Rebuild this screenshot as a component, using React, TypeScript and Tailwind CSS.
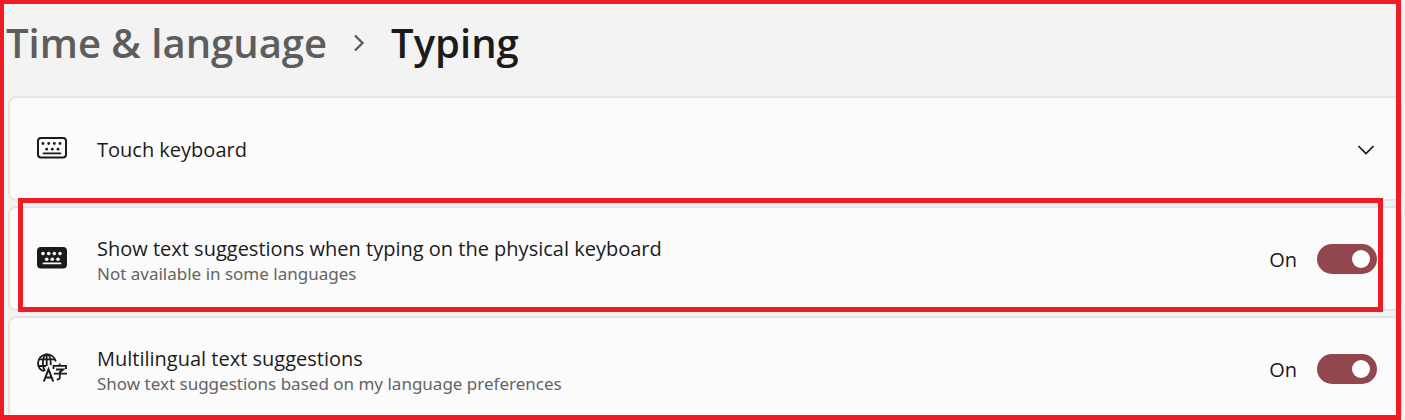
import type { ReactNode } from "react";

function KeyboardIcon({ filled = false }: { filled?: boolean }) {
  const ink = filled ? "#fbfbfb" : "#1b1b1b";
  return (
    <svg viewBox="0 0 30 22" className="h-[22px] w-[30px]" aria-hidden="true">
      <rect x="1" y="1" width="28" height="19.500" rx="3" fill={filled ? "#1b1b1b" : "none"} stroke="#1b1b1b" strokeWidth="2" />
      {[6, 11.7, 17.3, 23].map((x) => (
        <circle key={x} cx={x} cy="6.5" r={filled ? 1.8 : 1.4} fill={ink} />
      ))}
      {[9.7, 15.3, 21].map((x) => (
        <circle key={x} cx={x} cy="12.2" r={filled ? 1.8 : 1.4} fill={ink} />
      ))}
      <path d="M6.500 16.400h17" stroke={ink} strokeWidth="1.8" strokeLinecap="round" />
    </svg>
  );
}

function LanguageIcon() {
  return (
    <svg viewBox="0 0 30 30" className="size-[30px]" fill="none" stroke="#1b1b1b" strokeWidth="1.8" aria-hidden="true">
      <path d="M7 18.200C3.500 17 1 13.800 1 10a9 9 0 0 1 17.800-1.500" />
      <path d="M8 18C6.500 16 5.800 13 5.800 10S7.200 1.300 9.700 1.300s4 4 4 8.700v2" />
      <path d="M2 6.300h16M1.500 13h7.500M9.700 1v12" />
      <path d="M6.800 28.500l4.700-12.200 4.700 12.200M8.400 24.500h6.200" strokeWidth="2" />
      <path d="M16.500 16v-3.200H29V16M22.700 10.500v2.300M19 16.500h7.300l-3.500 2.700v5.500c0 1.300-.5 1.800-3 1.800M16.800 20.600H30" />
    </svg>
  );
}

function Card({ icon, title, note, highlighted, children }: {
  icon: ReactNode;
  title: string;
  note?: string;
  highlighted?: boolean;
  children: ReactNode;
}) {
  return (
    <section className="relative flex h-[105px] shrink-0 items-center rounded-lg border-2 border-[#e5e5e5] bg-[#fbfbfb] pr-[23px] pl-[27px]">
      <div className="flex w-[60px] shrink-0 pb-[2px]">{icon}</div>
      <div className="min-w-0 flex-1 pt-[3px]">
        <h2 className="text-[20px] leading-7">{title}</h2>
        {note && <p className="font-['Noto_Sans',sans-serif] text-[17px] leading-[22px] text-[#646464]">{note}</p>}
      </div>
      {children}
      {highlighted && (
        <div className="pointer-events-none absolute -top-[10px] right-[17px] -bottom-[3px] left-2 z-10 border-[5px] border-[#ef1c23]" />
      )}
    </section>
  );
}

function Toggle({ label }: { label: string }) {
  return (
    <label className="flex items-center gap-5 text-[20px]">
      <span className="pt-[3px]">On</span>
      <span className="relative flex">
        <input type="checkbox" role="switch" aria-label={label} defaultChecked className="peer h-[30px] w-[60px] appearance-none rounded-full bg-[#8a8a8a] checked:bg-[#924750]" />
        <span className="pointer-events-none absolute top-[6px] left-[7px] size-[18px] rounded-full bg-white peer-checked:right-[7px] peer-checked:left-auto" />
      </span>
    </label>
  );
}

export default function App() {
  return (
    <main className="relative flex h-screen flex-col overflow-hidden bg-[#f3f3f3] font-['Open_Sans','Noto_Sans',sans-serif] text-[#1b1b1b]">
      <nav className="flex h-24 shrink-0 items-center pb-[11px] pl-[6px] text-[40px] font-semibold" aria-label="Breadcrumb">
        <a href="#time-language" className="text-[#5d5d5d]">Time &amp; language</a>
        <svg viewBox="0 0 12 18" className="mx-[26px] h-[18px] w-3" fill="none" stroke="#5d5d5d" strokeWidth="2.4" aria-hidden="true">
          <path d="M2 1.500l7.500 7.500L2 16.500" />
        </svg>
        <h1>Typing</h1>
      </nav>
      <div className="flex flex-col gap-[5px] pr-[3px] pl-2">
        <Card icon={<KeyboardIcon />} title="Touch keyboard">
          <button type="button" aria-label="Expand touch keyboard" className="pt-[2px] pr-[3px]">
            <svg viewBox="0 0 16 10" className="h-[10px] w-4" fill="none" stroke="#1b1b1b" strokeWidth="1.6" aria-hidden="true">
              <path d="M.500 1l7.500 7.500L15.500 1" />
            </svg>
          </button>
        </Card>
        <Card icon={<KeyboardIcon filled />} title="Show text suggestions when typing on the physical keyboard" note="Not available in some languages" highlighted>
          <Toggle label="Show text suggestions when typing on the physical keyboard" />
        </Card>
        <Card icon={<LanguageIcon />} title="Multilingual text suggestions" note="Show text suggestions based on my language preferences">
          <Toggle label="Multilingual text suggestions" />
        </Card>
      </div>
      <div className="pointer-events-none absolute inset-y-0 right-1 left-0 z-20 border-4 border-r-[5px] border-b-[5px] border-[#ef1c23]" />
    </main>
  );
}
